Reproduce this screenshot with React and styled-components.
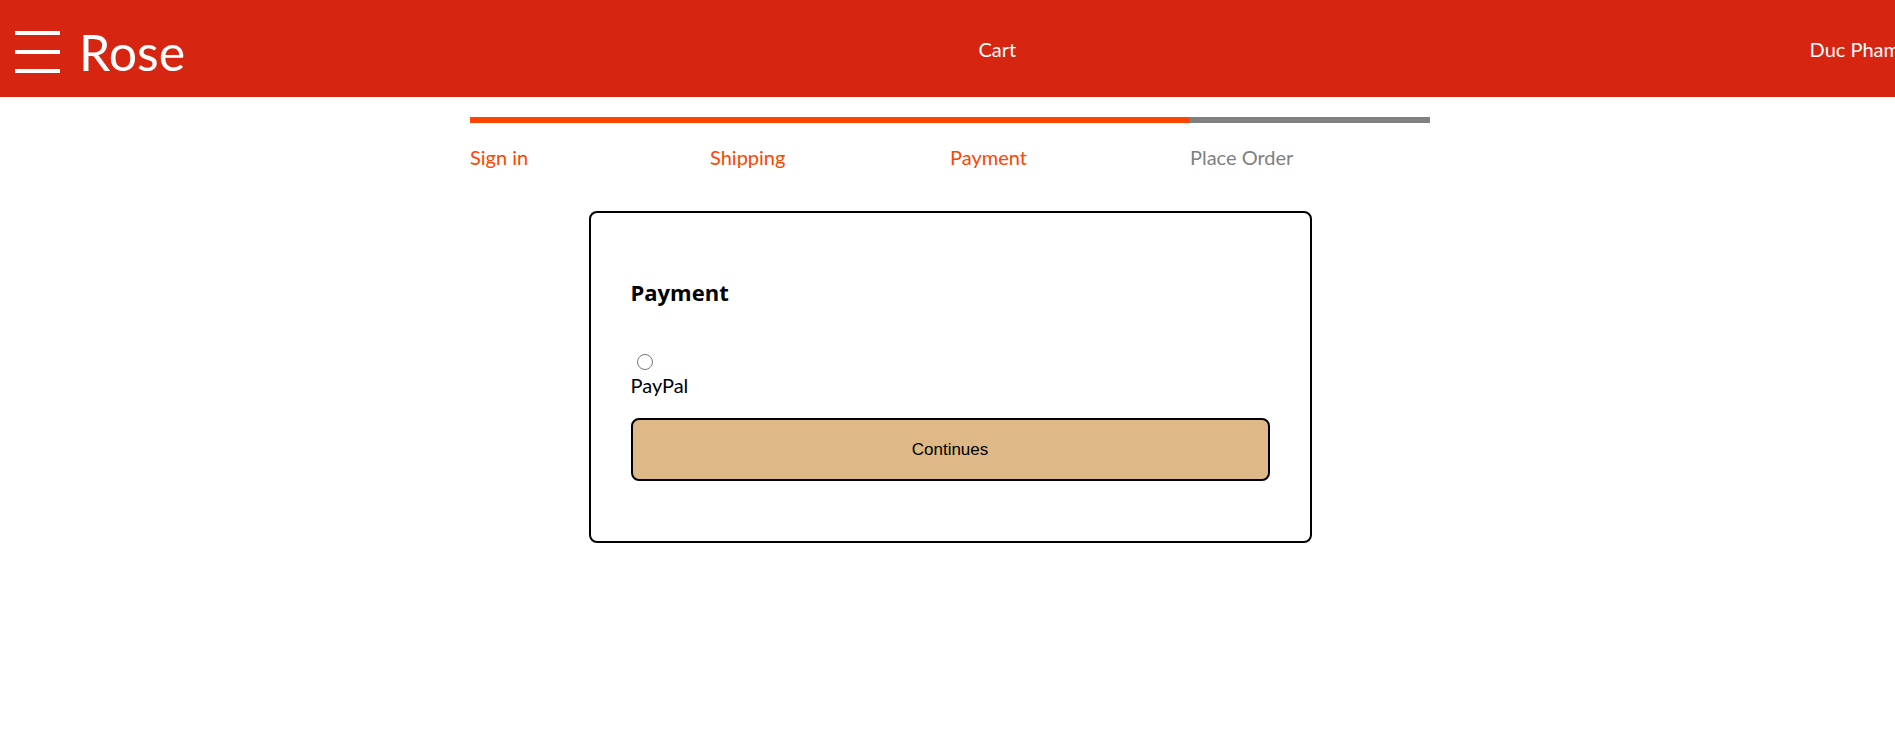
import React from 'react';
import styled, { createGlobalStyle } from 'styled-components';

const GlobalStyle = createGlobalStyle`
  html, body {
    margin: 0;
    padding: 0;
    overflow: hidden;
    background: #fff;
    font-family: Lato, "Open Sans", sans-serif;
  }
`;

const Page = styled.div`
  width: 1900px;
`;

const Header = styled.header`
  height: 97px;
  background-color: #d62612;
  color: #fff;
  display: flex;
  align-items: center;
  justify-content: space-between;
  padding-left: 15px;
  box-sizing: border-box;
`;

const Brand = styled.div`
  display: flex;
  align-items: center;
  gap: 19px;
  margin-top: 6px;
`;

const MenuButton = styled.svg`
  display: block;
  width: 45px;
  height: 42px;
`;

const Logo = styled.span`
  font-size: 50px;
  line-height: 1.2;
`;

const NavLink = styled.a`
  color: #fff;
  font-size: 20px;
  line-height: 1.2;
  text-decoration: none;
  white-space: nowrap;
`;

const Steps = styled.div`
  width: 960px;
  margin: 20px auto 0;
  display: flex;
`;

const Step = styled.div`
  flex: 1;
  border-top: 6px solid ${(p) => (p.$active ? '#ff4500' : '#808080')};
  color: ${(p) => (p.$active ? '#ff4500' : '#808080')};
  padding-top: 22px;
  font-size: 20px;
  line-height: 1.2;
`;

const Card = styled.form`
  box-sizing: border-box;
  width: 723px;
  margin: 42px auto 0;
  border: 2px solid #000;
  border-radius: 8px;
  padding: 40px;
  display: flex;
  flex-direction: column;
`;

const Title = styled.h1`
  margin: 26px 0 0;
  font-family: "Open Sans", Lato, sans-serif;
  font-size: 22px;
  line-height: 1.2;
  font-weight: 700;
  color: #000;
`;

const Radio = styled.input`
  display: block;
  width: 16px;
  height: 16px;
  margin: 49px 0 0 6px;
`;

const RadioLabel = styled.label`
  margin-top: 3px;
  font-size: 20px;
  line-height: 1.2;
  color: #000;
`;

const PrimaryButton = styled.button`
  margin: 21px 0 20px;
  height: 63px;
  background-color: #deb887;
  border: 2px solid #000;
  border-radius: 8px;
  font-family: "Liberation Sans", Arial, sans-serif;
  font-size: 17px;
  color: #000;
  cursor: pointer;
`;

const steps = [
  { label: 'Sign in', active: true },
  { label: 'Shipping', active: true },
  { label: 'Payment', active: true },
  { label: 'Place Order', active: false },
];

export default function App() {
  return (
    <Page>
      <GlobalStyle />
      <Header>
        <Brand>
          <MenuButton viewBox="0 0 45 42">
            <rect x="0" y="0" width="45" height="4" fill="#fff" />
            <rect x="0" y="19" width="45" height="4" fill="#fff" />
            <rect x="0" y="38" width="45" height="4" fill="#fff" />
          </MenuButton>
          <Logo>Rose</Logo>
        </Brand>
        <NavLink href="#">Cart</NavLink>
        <NavLink href="#">Duc Pham</NavLink>
      </Header>

      <Steps>
        {steps.map((s) => (
          <Step key={s.label} $active={s.active}>
            {s.label}
          </Step>
        ))}
      </Steps>

      <Card onSubmit={(e) => e.preventDefault()}>
        <Title>Payment</Title>
        <Radio type="radio" id="paypal" name="paymentMethod" value="PayPal" />
        <RadioLabel htmlFor="paypal">PayPal</RadioLabel>
        <PrimaryButton type="submit">Continues</PrimaryButton>
      </Card>
    </Page>
  );
}
